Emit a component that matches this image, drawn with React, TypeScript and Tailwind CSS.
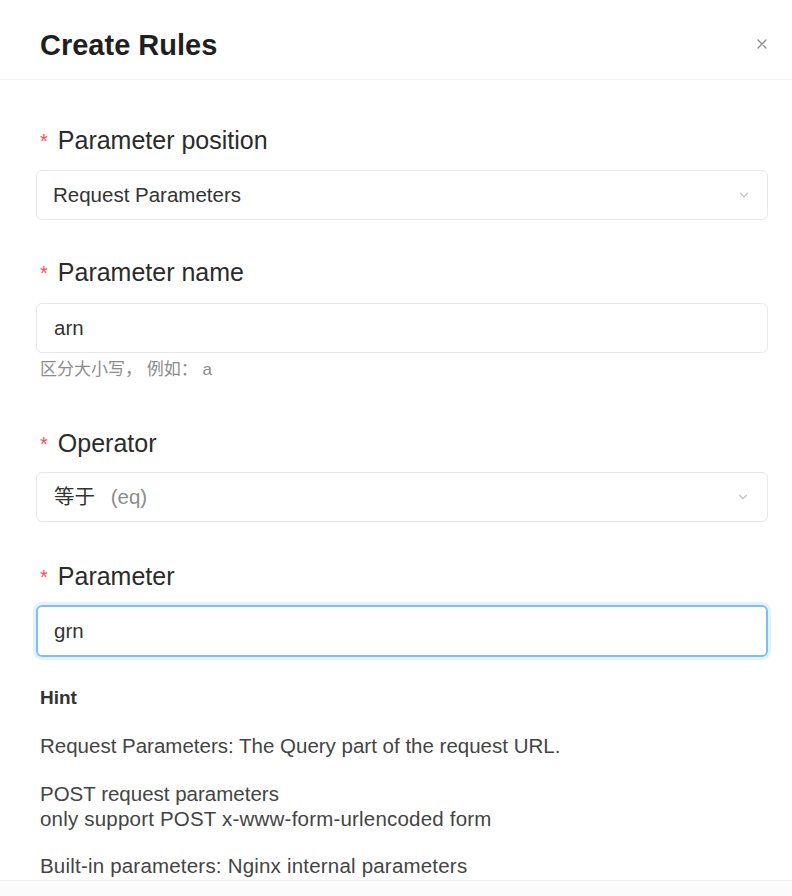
import React from "react";

const font = { fontFamily: '"Liberation Sans", "Noto Sans CJK SC", sans-serif' };

function Label({ text }: { text: string }) {
  return (
    <div className="flex items-center h-[30px] pl-[4px]">
      <span className="text-[#ff4d4f] text-[20px] leading-none mr-[10px] mt-[2px]">*</span>
      <span className="text-[25px] text-[#2b2b2b] leading-none">{text}</span>
    </div>
  );
}

function Chevron() {
  return (
    <svg width="14" height="14" viewBox="0 0 24 24" fill="none" stroke="#c4c4c4" strokeWidth="2.2" strokeLinecap="round" strokeLinejoin="round">
      <path d="M6 9l6 6 6-6" />
    </svg>
  );
}

export default function App() {
  return (
    <div className="w-[792px] h-[896px] bg-white overflow-hidden flex flex-col" style={font}>
      <div className="h-[80px] shrink-0 flex items-center justify-between pl-[40px] pr-[22px] border-b border-[#f2f2f2]">
        <span className="text-[29px] font-bold text-[#1f1f1f] mt-[12px]">Create Rules</span>
        <svg width="16" height="16" viewBox="0 0 24 24" fill="none" stroke="#8c8c8c" strokeWidth="2" strokeLinecap="round" className="mt-[8px]">
          <path d="M6 6l12 12M18 6L6 18" />
        </svg>
      </div>
      <div className="h-[800px] shrink-0 overflow-hidden pl-[36px] pr-[24px] pt-[45px]">
        <Label text="Parameter position" />
        <div className="mt-[15px] h-[50px] border border-[#e3e8ee] rounded-[6px] flex items-center justify-between px-[16px] bg-white">
          <span className="text-[20.5px] text-[#333]">Request Parameters</span>
          <Chevron />
        </div>

        <div className="mt-[37px]">
          <Label text="Parameter name" />
        </div>
        <div className="mt-[16px] h-[50px] border border-[#e8e8e8] rounded-[6px] flex items-center px-[17px]">
          <span className="text-[20.5px] text-[#333]">arn</span>
        </div>
        <div className="h-[34px] flex items-center pl-[4px] text-[17px] text-[#8c8c8c]">区分大小写， 例如： a</div>

        <div className="mt-[41px]">
          <Label text="Operator" />
        </div>
        <div className="mt-[14px] h-[50px] border border-[#e8e8e8] rounded-[6px] flex items-center justify-between px-[17px]">
          <span className="text-[20.5px] text-[#333]">
            等于 <span className="text-[#8c8c8c] ml-[10px]">(eq)</span>
          </span>
          <Chevron />
        </div>

        <div className="mt-[39px]">
          <Label text="Parameter" />
        </div>
        <div className="mt-[14px] h-[52px] border-2 border-[#7cc0f0] rounded-[6px] flex items-center px-[16px] shadow-[0_0_0_3px_rgba(24,144,255,0.12)]">
          <span className="text-[20.5px] text-[#333]">grn</span>
        </div>

        <div className="pl-[4px] text-[20.5px] text-[#444] leading-[25px]">
          <div className="mt-[28px] font-bold text-[#333] text-[19px]">Hint</div>
          <div className="mt-[23px]">Request Parameters: The Query part of the request URL.</div>
          <div className="mt-[23px]">POST request parameters</div>
          <div className="tracking-[0.2px]">only support POST x-www-form-urlencoded form</div>
          <div className="mt-[22px] tracking-[0.2px]">Built-in parameters: Nginx internal parameters</div>
        </div>
      </div>
      <div className="flex-1 border-t border-[#f0f0f0] bg-[#fbfbfb]" />
    </div>
  );
}
